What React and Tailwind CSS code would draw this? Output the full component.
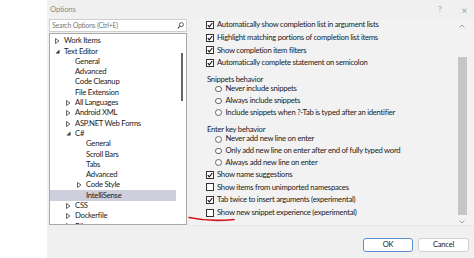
import React from 'react';

const tree = [
  { t: 'Work Items', l: 0, e: 'c' },
  { t: 'Text Editor', l: 0, e: 'o' },
  { t: 'General', l: 1 },
  { t: 'Advanced', l: 1 },
  { t: 'Code Cleanup', l: 1 },
  { t: 'File Extension', l: 1 },
  { t: 'All Languages', l: 1, e: 'c' },
  { t: 'Android XML', l: 1, e: 'c' },
  { t: 'ASP.NET Web Forms', l: 1, e: 'c' },
  { t: 'C#', l: 1, e: 'o' },
  { t: 'General', l: 2 },
  { t: 'Scroll Bars', l: 2 },
  { t: 'Tabs', l: 2 },
  { t: 'Advanced', l: 2 },
  { t: 'Code Style', l: 2, e: 'c' },
  { t: 'IntelliSense', l: 2, sel: true },
  { t: 'CSS', l: 1, e: 'c' },
  { t: 'Dockerfile', l: 1, e: 'c' },
  { t: 'F#', l: 1, e: 'c' },
];

const indent = ['pl-[5px]', 'pl-[16px]', 'pl-[27px]'];

function Arrow({ kind }) {
  if (!kind) return <span className="w-[9px] shrink-0" />;
  return (
    <span className="w-[9px] shrink-0 flex items-center">
      {kind === 'c' ? (
        <svg width="5" height="6" viewBox="0 0 5 6">
          <path d="M0.5 0.5 L4 3 L0.5 5.5 Z" fill="none" stroke="#555" strokeWidth="0.9" />
        </svg>
      ) : (
        <svg width="5" height="5" viewBox="0 0 5 5">
          <path d="M4.5 0.5 L4.5 4.5 L0.5 4.5 Z" fill="#333" />
        </svg>
      )}
    </span>
  );
}

function Check({ on, children }) {
  return (
    <div className="h-[12.6px] flex items-center gap-[3px]">
      <span className="w-[8px] h-[8px] border border-[#333] bg-white flex items-center justify-center shrink-0">
        {on && (
          <svg width="6" height="6" viewBox="0 0 6 6">
            <path d="M0.8 3.2 L2.3 4.8 L5.3 1" fill="none" stroke="#111" strokeWidth="1.1" />
          </svg>
        )}
      </span>
      <span>{children}</span>
    </div>
  );
}

function Radio({ children }) {
  return (
    <div className="h-[11.7px] flex items-center gap-[4px] pl-[9px]">
      <span className="w-[6.5px] h-[6.5px] rounded-full border border-[#666] bg-white shrink-0" />
      <span>{children}</span>
    </div>
  );
}

export default function App() {
  return (
    <div className="w-[474px] h-[258px] flex bg-white font-['Lato','Noto_Sans',sans-serif] text-[7.7px] tracking-[-0.25px] text-[#1b1b1b] leading-none overflow-hidden">
      <div className="w-[47px] shrink-0 bg-white" />
      <div className="flex-1 bg-[#f0f0f0] flex flex-col relative">
        {/* title bar */}
        <div className="h-[19px] flex items-center justify-between pl-[3px] pr-[7px] text-[#8e8e8e]">
          <span className="text-[7.8px]">Options</span>
          <div className="flex items-center gap-[20px] text-[7.5px] text-[#9a9a9a]">
            <span>?</span>
            <span className="text-[10px]">×</span>
          </div>
        </div>

        <div className="flex h-[207px]">
          {/* left column */}
          <div className="w-[140px] pl-[2px] flex flex-col">
            <div className="h-[13px] bg-white border border-[#cfcfcf] flex items-center justify-between px-[2px] text-[#7a7a7a] text-[7px]">
              <span>Search Options (Ctrl+E)</span>
              <svg width="7" height="7" viewBox="0 0 8 8">
                <circle cx="5" cy="3" r="2.3" fill="none" stroke="#444" strokeWidth="1" />
                <path d="M3.3 4.7 L0.8 7.2" stroke="#444" strokeWidth="1.2" />
              </svg>
            </div>
            <div className="mt-[1px] h-[192px] bg-white border border-[#a9a9a9] pt-[2px] overflow-hidden relative">
              {tree.map((it, i) => (
                <div
                  key={i}
                  className={`h-[10.3px] w-[126px] flex items-center ${indent[it.l]} ${it.sel ? 'bg-[#cdd0dc]' : ''}`}
                >
                  <Arrow kind={it.e} />
                  <span>{it.t}</span>
                </div>
              ))}
              <div className="absolute left-[131px] top-[19px] w-[1.5px] h-[48px] bg-[#666]" />
            </div>
          </div>

          {/* right pane */}
          <div className="flex-1 flex pl-[14px] border-b border-[#e2e2e2] bg-[#f2f2f2] ml-[5px]">
            <div className="flex-1">
              <Check on>Automatically show completion list in argument lists</Check>
              <Check on>Highlight matching portions of completion list items</Check>
              <Check on>Show completion item filters</Check>
              <Check on>Automatically complete statement on semicolon</Check>
              <div className="h-[13px] mt-[1px] flex items-end pl-[1px]">Snippets behavior</div>
              <Radio>Never include snippets</Radio>
              <Radio>Always include snippets</Radio>
              <Radio>Include snippets when ?-Tab is typed after an identifier</Radio>
              <div className="h-[15px] flex items-end pl-[1px]">Enter key behavior</div>
              <Radio>Never add new line on enter</Radio>
              <Radio>Only add new line on enter after end of fully typed word</Radio>
              <Radio>Always add new line on enter</Radio>
              <Check on>Show name suggestions</Check>
              <Check>Show items from unimported namespaces</Check>
              <Check on>Tab twice to insert arguments (experimental)</Check>
              <Check>Show new snippet experience (experimental)</Check>
            </div>
            <div className="w-[10px] mr-[7px] flex flex-col items-center">
              <svg width="6" height="4" viewBox="0 0 6 4" className="mt-[5px]">
                <path d="M0.5 3.5 L3 1 L5.5 3.5" fill="none" stroke="#999" strokeWidth="0.9" />
              </svg>
              <div className="w-[9px] h-[158px] mt-[29px] bg-[#c6c6c6]" />
              <svg width="6" height="4" viewBox="0 0 6 4" className="mt-[5px]">
                <path d="M0.5 0.5 L3 3 L5.5 0.5" fill="none" stroke="#999" strokeWidth="0.9" />
              </svg>
            </div>
          </div>
        </div>

        {/* buttons */}
        <div className="flex-1 flex items-center justify-end gap-[5px] pr-[5px] pt-[6px]">
          <button className="w-[50px] h-[14px] bg-white border border-[#5b8fcf] rounded-[3px] text-[7.6px] text-[#1b1b1b]">OK</button>
          <button className="w-[51px] h-[14px] bg-white border border-[#d0d0d0] rounded-[3px] text-[7.6px] text-[#1b1b1b]">Cancel</button>
        </div>

        <svg className="absolute left-[141px] top-[215px]" width="50" height="9" viewBox="0 0 50 9">
          <path d="M1 2.5 Q 22 7 46 4.5" fill="none" stroke="#d4141c" strokeWidth="1.6" strokeLinecap="round" />
        </svg>
      </div>
    </div>
  );
}
